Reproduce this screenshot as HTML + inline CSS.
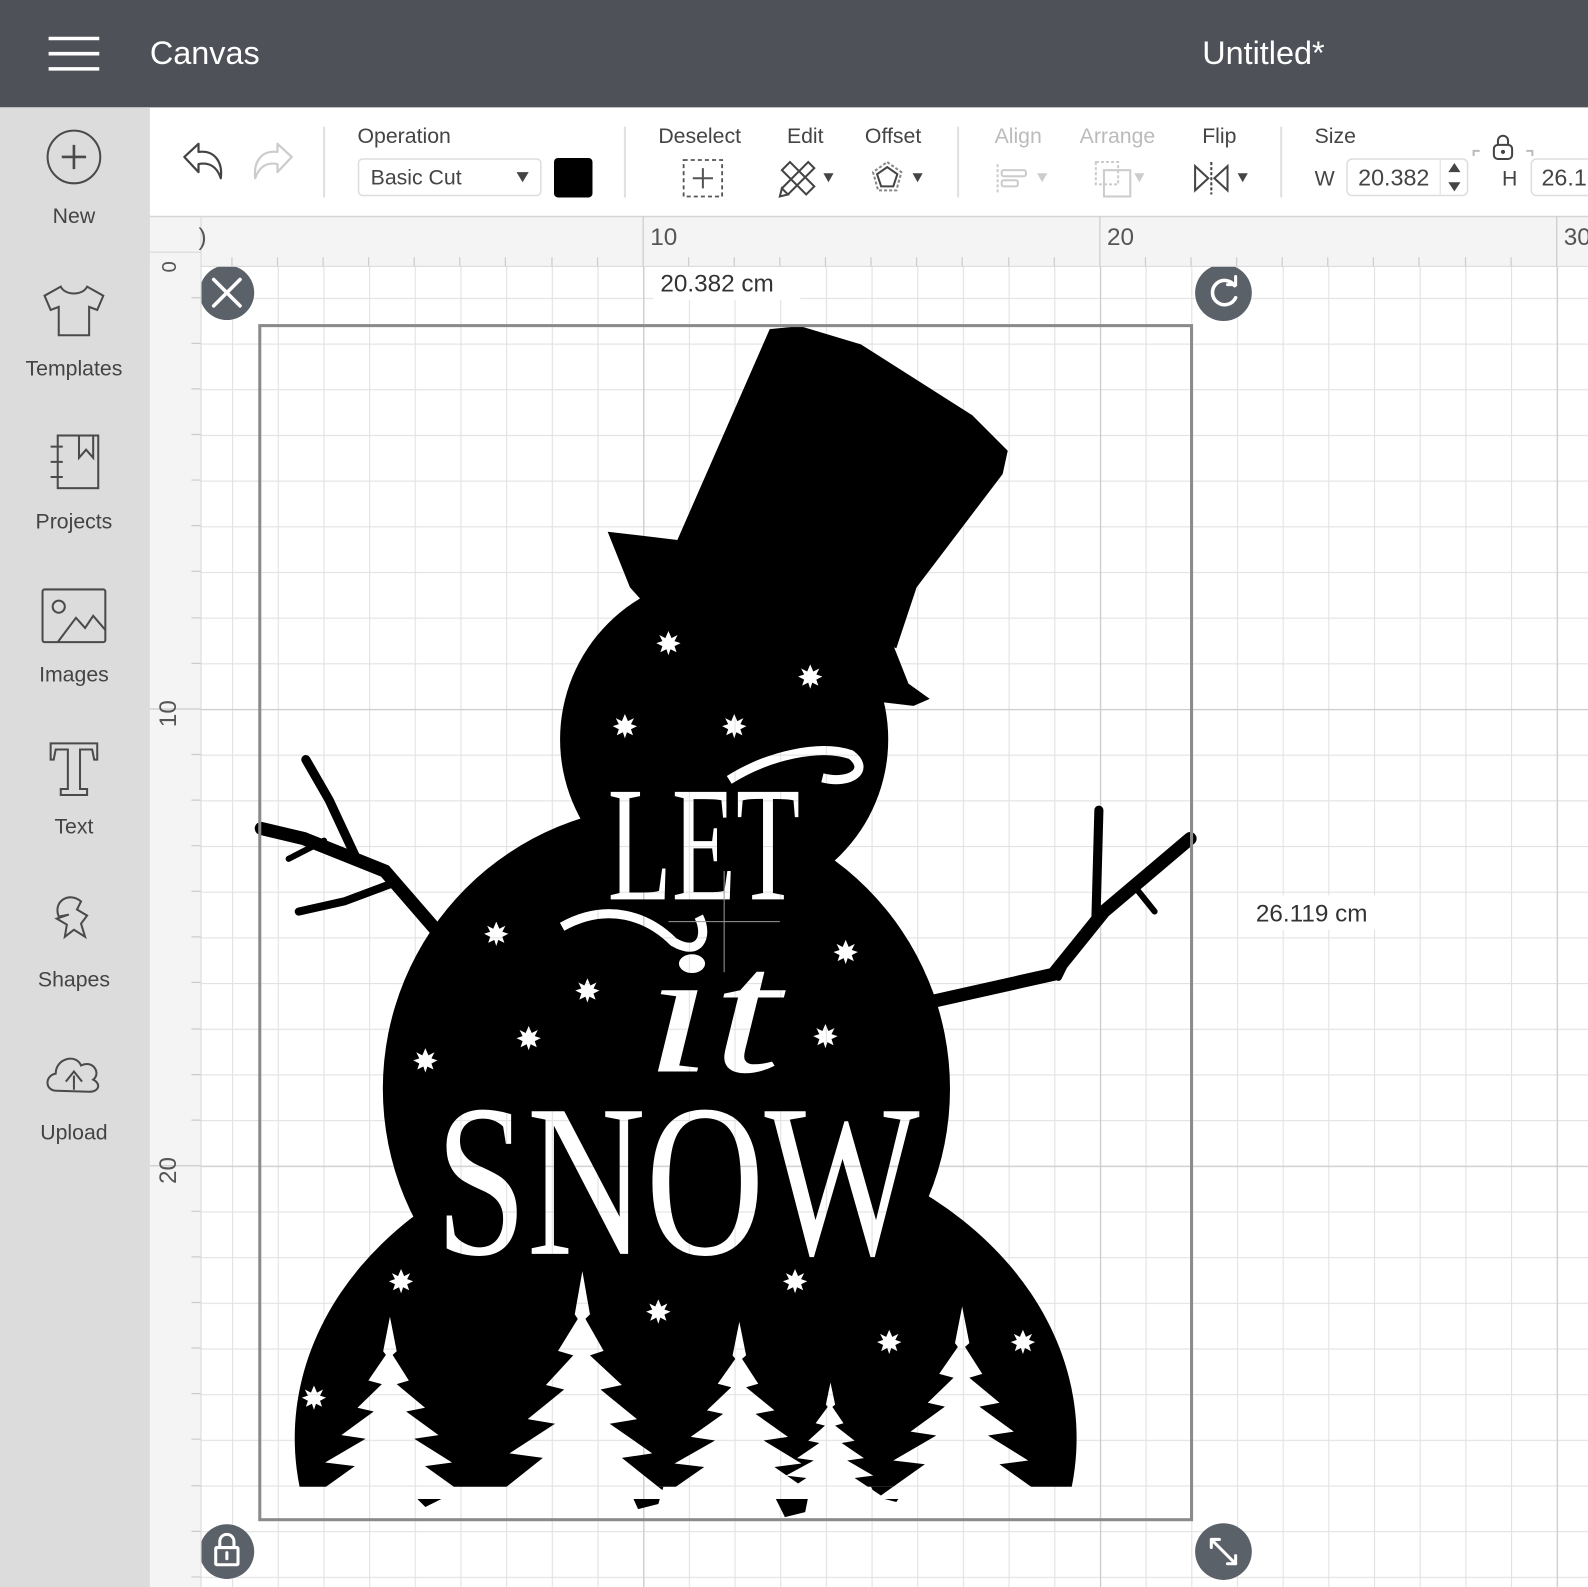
<!DOCTYPE html>
<html><head><meta charset="utf-8"><style>
html,body{margin:0;padding:0;width:1588px;height:1587px;overflow:hidden;background:#fff;font-family:"Liberation Sans",sans-serif}
svg{position:absolute;left:0;top:0}
</style></head><body>
<svg width="1588" height="1587" viewBox="0 0 1588 1587" xmlns="http://www.w3.org/2000/svg" font-family="Liberation Sans, sans-serif">
<defs>
<pattern id="gmin" patternUnits="userSpaceOnUse" x="184" y="249" width="45.1" height="45.1">
<path d="M0.5,0V45.1M0,0.5H45.1" stroke="#e2e2e2" stroke-width="1.2" fill="none"/></pattern>
<pattern id="gmaj" patternUnits="userSpaceOnUse" x="184" y="249" width="451" height="451">
<path d="M0.5,0V451M0,0.5H451" stroke="#cdcdcd" stroke-width="1.5" fill="none"/></pattern>
<symbol id="tree" viewBox="-60 0 120 200" preserveAspectRatio="none" overflow="visible">
<polygon points="0,0 5,38 2,42 14,70 5,74 26,100 12,104 36,130 18,134 46,160 26,164 60,200 -60,200 -26,164 -48,160 -18,134 -36,130 -12,104 -24,100 -6,74 -16,70 -3,42 -5,38"/>
</symbol>
<symbol id="star" viewBox="-12 -12 24 24" overflow="visible">
<polygon points="0,-12 3,-5 9,-8 6,-2 12,0 6,3 8,9 2,6 0,12 -2,6 -8,9 -6,3 -12,0 -6,-2 -9,-8 -3,-5"/>
</symbol>
<mask id="cut" maskUnits="userSpaceOnUse" x="0" y="0" width="1588" height="1587">
<rect x="0" y="0" width="1588" height="1587" fill="#fff"/>
<g fill="#000">
<use href="#tree" x="305" y="1300" width="160" height="180"/>
<use href="#tree" x="485" y="1255" width="180" height="225"/>
<use href="#tree" x="650" y="1305" width="160" height="175"/>
<use href="#tree" x="765" y="1365" width="110" height="115"/>
<use href="#tree" x="865" y="1290" width="170" height="190"/>
<g>
<use href="#star" x="648" y="623" width="24" height="24"/>
<use href="#star" x="788" y="656" width="24" height="24"/>
<use href="#star" x="605" y="705" width="24" height="24"/>
<use href="#star" x="713" y="705" width="24" height="24"/>
<use href="#star" x="478" y="910" width="24" height="24"/>
<use href="#star" x="568" y="966" width="24" height="24"/>
<use href="#star" x="823" y="928" width="24" height="24"/>
<use href="#star" x="510" y="1013" width="24" height="24"/>
<use href="#star" x="408" y="1035" width="24" height="24"/>
<use href="#star" x="803" y="1011" width="24" height="24"/>
<use href="#star" x="384" y="1253" width="24" height="24"/>
<use href="#star" x="638" y="1283" width="24" height="24"/>
<use href="#star" x="773" y="1253" width="24" height="24"/>
<use href="#star" x="866" y="1313" width="24" height="24"/>
<use href="#star" x="998" y="1313" width="24" height="24"/>
<use href="#star" x="298" y="1368" width="24" height="24"/>
</g>
<text x="600" y="888" font-family="Liberation Serif, serif" font-size="162" textLength="190" lengthAdjust="spacingAndGlyphs">LET</text>
<path d="M555,915 C600,890 640,905 665,930 C690,945 700,925 690,905" stroke="#000" stroke-width="9" fill="none"/>
<path d="M720,770 C760,745 810,735 840,745 C860,760 840,775 812,768" stroke="#000" stroke-width="9" fill="none"/>
<text x="636" y="1058" font-family="Liberation Serif, serif" font-style="italic" font-size="175" textLength="135" lengthAdjust="spacingAndGlyphs">it</text>
<text x="430" y="1238" font-family="Liberation Serif, serif" font-size="215" textLength="478" lengthAdjust="spacingAndGlyphs">SNOW</text>
</g>
</mask>
<clipPath id="bclip"><rect x="0" y="0" width="1588" height="1468"/></clipPath>
</defs>
<g transform="scale(1.0128)">
<!-- canvas -->
<rect x="148" y="213" width="1440" height="1374" fill="#fff"/>
<rect x="198" y="263" width="1390" height="1324" fill="url(#gmin)"/>
<rect x="198" y="263" width="1390" height="1324" fill="url(#gmaj)"/>

<!-- snowman -->
<g mask="url(#cut)" fill="#000">
<ellipse cx="677" cy="1420" rx="386" ry="305" clip-path="url(#bclip)"/>
<circle cx="658" cy="1075" r="280"/>
<circle cx="715" cy="730" r="162"/>
<polygon points="760,325 790,322 850,340 960,410 995,445 990,468 905,580 885,640 690,560 668,535"/>
<polygon points="600,525 668,533 880,632 897,675 918,690 902,697 860,692 760,640 640,600 622,580"/>
<g stroke="#000" fill="none" stroke-linecap="round">
<path d="M445,935 L380,860 L300,828 L258,818" stroke-width="13"/>
<path d="M352,848 L325,790 L302,750" stroke-width="9"/>
<path d="M388,872 L340,890 L295,900" stroke-width="8"/>
<path d="M320,830 L285,848" stroke-width="6"/>
<path d="M915,990 L1040,962 L1090,900 L1175,828" stroke-width="13"/>
<path d="M1082,910 L1085,800" stroke-width="9"/>
<path d="M1045,965 L1062,930" stroke-width="7"/>
<path d="M1120,875 L1140,900" stroke-width="6"/>
</g>
<path d="M400,1468 l20,20 20,-10 10,-12z M620,1468 l10,22 20,-5 5,-17z M760,1468 l15,30 20,-5 5,-25z M860,1468 l5,10 20,5 10,-15z"/>
</g>
<path d="M660,910H770M715,860V960" stroke="#999" stroke-width="1"/>

<!-- bounding box -->
<rect x="256.5" y="321.5" width="920" height="1179" fill="none" stroke="#8a8a8a" stroke-width="3"/>
<rect x="645" y="262" width="145" height="34" fill="#fff"/>
<text x="652" y="288" font-size="24" fill="#333">20.382 cm</text>
<rect x="1232" y="884" width="135" height="34" fill="#fff"/>
<text x="1240" y="910" font-size="24" fill="#333">26.119 cm</text>
<g fill="#5b6168">
<circle cx="224" cy="289" r="27"/><circle cx="1208" cy="289" r="28"/>
<circle cx="224" cy="1532" r="27"/><circle cx="1208" cy="1532" r="28"/>
</g>
<g stroke="#fff" stroke-width="3.5" fill="none" stroke-linecap="round">
<path d="M211,276L237,302M237,276L211,302"/>
<path d="M1219,282A12,12 0 1 0 1220,294"/><path d="M1212,281h8v-8" stroke-width="3"/>
<rect x="213" y="1528" width="22" height="17" rx="1" stroke-width="3"/><path d="M217,1528v-6a7,7 0 0 1 14,0v6" stroke-width="3"/><path d="M224,1533v6" stroke-width="3"/>
<path d="M1196,1520L1220,1544M1196,1520h8M1196,1520v8M1220,1544h-8M1220,1544v-8" stroke-width="3"/>
</g>

<!-- rulers -->
<rect x="148" y="213" width="1440" height="50" fill="#f4f4f4"/>
<rect x="148" y="213" width="50" height="1374" fill="#f4f4f4"/>
<line x1="148" y1="213.5" x2="1588" y2="213.5" stroke="#d6d6d6" stroke-width="2"/>
<line x1="198" y1="263" x2="1588" y2="263" stroke="#d8d8d8"/>
<line x1="198.5" y1="213" x2="198.5" y2="1587" stroke="#d8d8d8"/>
<line x1="148" y1="249" x2="198" y2="249" stroke="#d8d8d8"/>
<g stroke="#ccc" stroke-width="1.2">
<path d="M229,254V263M274,254V263M319,254V263M364,254V263M409,254V263M454,254V263M499,254V263M545,254V263M590,254V263M680,254V263M725,254V263M770,254V263M815,254V263M860,254V263M905,254V263M950,254V263M996,254V263M1041,254V263M1131,254V263M1176,254V263M1221,254V263M1266,254V263M1311,254V263M1356,254V263M1401,254V263M1447,254V263M1492,254V263M1582,254V263"/>
<path d="M635,213V263M1086,213V263M1537,213V263"/>
<path d="M189,294H198M189,339H198M189,384H198M189,429H198M189,474H198M189,519H198M189,564H198M189,610H198M189,655H198M189,745H198M189,790H198M189,835H198M189,880H198M189,925H198M189,970H198M189,1016H198M189,1061H198M189,1106H198M189,1196H198M189,1241H198M189,1286H198M189,1331H198M189,1376H198M189,1421H198M189,1467H198M189,1512H198M189,1557H198"/>
<path d="M148,700H198M148,1151H198"/>
</g>
<g font-size="24" fill="#555">
<text x="196" y="242">)</text>
<text x="642" y="242">10</text>
<text x="1093" y="242">20</text>
<text x="1544" y="242">30</text>
<text transform="translate(174,718) rotate(-90)">10</text>
<text transform="translate(174,1169) rotate(-90)">20</text>
<text transform="translate(174,269) rotate(-90)" font-size="20">0</text>
</g>

<!-- toolbar -->
<rect x="148" y="106" width="1440" height="107" fill="#fff"/>
<g stroke="#e0e0e0" stroke-width="2"><path d="M320,125V195M617,125V195M946,125V195M1265,125V195"/></g>
<g fill="none" stroke="#444" stroke-width="2.2" stroke-linejoin="round">
<path d="M182,155L196,142V150C212,148 220,160 218,176C214,164 206,160 196,162V170Z"/>
</g>
<g fill="none" stroke="#ccc" stroke-width="2.2" stroke-linejoin="round">
<path d="M288,155L274,142V150C258,148 250,160 252,176C256,164 264,160 274,162V170Z"/>
</g>
<g font-size="21" fill="#444">
<text x="353" y="141">Operation</text>
<text x="650" y="141">Deselect</text>
<text x="777" y="141">Edit</text>
<text x="854" y="141">Offset</text>
<text x="982" y="141" fill="#bbb">Align</text>
<text x="1066" y="141" fill="#bbb">Arrange</text>
<text x="1187" y="141">Flip</text>
<text x="1298" y="141">Size</text>
<text x="1298" y="183">W</text>
<text x="1483" y="183">H</text>
</g>
<rect x="354" y="157" width="180" height="36" rx="4" fill="#fff" stroke="#ddd" stroke-width="1.5"/>
<text x="366" y="182" font-size="21" fill="#444">Basic Cut</text>
<path d="M510,170h12l-6,10z" fill="#444"/>
<rect x="547" y="156" width="38" height="39" rx="4" fill="#000"/>
<rect x="675" y="158" width="38" height="36" fill="none" stroke="#555" stroke-width="1.8" stroke-dasharray="4,3"/>
<path d="M694,166V186M684,176H704" stroke="#555" stroke-width="2"/>
<g fill="none" stroke="#444" stroke-width="2">
<path d="M772,186L798,160L804,166L778,192Z M770,194L772,186 778,192Z"/>
<path d="M772,168L780,160L804,184L796,192Z"/>
<path d="M876,160L890,170L885,188H867L862,170Z" stroke-dasharray="3,2" stroke="#888"/>
<path d="M876,165L886,172L882,184H870L866,172Z"/>
</g>
<path d="M813,171h10l-5,9z M901,171h10l-5,9z M1222,171h10l-5,9z" fill="#444"/>
<path d="M1024,171h10l-5,9z M1120,171h10l-5,9z" fill="#ccc"/>
<g fill="none" stroke="#ccc" stroke-width="2">
<path d="M985,162V192" stroke-dasharray="3,2"/><rect x="989" y="168" width="24" height="6" rx="2"/><rect x="989" y="178" width="16" height="6" rx="2"/>
<rect x="1082" y="160" width="22" height="22" stroke-dasharray="3,2"/><rect x="1090" y="168" width="26" height="26"/>
</g>
<g fill="none" stroke="#444" stroke-width="2">
<path d="M1180,164L1193,176L1180,188Z M1212,164L1199,176L1212,188Z"/>
<path d="M1196,160V192" stroke-dasharray="3,2"/>
</g>
<rect x="1330" y="157" width="119" height="36" rx="5" fill="#fff" stroke="#ddd" stroke-width="1.5"/>
<line x1="1422" y1="158" x2="1422" y2="192" stroke="#ddd"/>
<text x="1341" y="183" font-size="23" fill="#444">20.382</text>
<path d="M1430,170l6,-9 6,9z M1430,180l6,9 6,-9z" fill="#444"/>
<rect x="1512" y="157" width="90" height="36" rx="5" fill="#fff" stroke="#ddd" stroke-width="1.5"/>
<text x="1522" y="183" font-size="23" fill="#444">26.1</text>
<g fill="none" stroke="#444" stroke-width="2"><rect x="1475" y="143" width="18" height="14" rx="4"/><path d="M1479,143v-4a5,5 0 0 1 10,0v4"/><path d="M1455,154v-5h6M1513,154v-5h-6" stroke="#bbb"/></g>
<circle cx="1484" cy="150" r="2" fill="#444"/>

<!-- top bar -->
<rect x="0" y="0" width="1588" height="106" fill="#4e5158"/>
<g stroke="#fff" stroke-width="3.5"><path d="M48,38H98M48,53H98M48,68H98"/></g>
<text x="148" y="63" font-size="32" fill="#fff">Canvas</text>
<text x="1187" y="63" font-size="32" fill="#fff">Untitled*</text>

<!-- sidebar -->
<rect x="0" y="106" width="148" height="1481" fill="#dcdcdc"/>
<g fill="none" stroke="#4a4a4a" stroke-width="2">
<circle cx="73" cy="155" r="26"/><path d="M73,143V167M61,155H85" stroke-width="2.6"/>
<path d="M60,283L44,292L50,306L58,303V331H88V303L96,306L102,292L86,283C82,292 64,292 60,283Z"/>
<rect x="57" y="430" width="40" height="52"/><path d="M78,430V452L85,444L92,452V430"/><path d="M50,441h12M50,456h12M50,471h12"/>
<rect x="42" y="582" width="62" height="52" rx="2"/><circle cx="58" cy="599" r="6"/><path d="M57,634L75,610L84,620L92,608L104,622"/>
<path d="M50,734H96V750H93L91,740H79V779H86V785H60V779H67V740H55L53,750H50Z"/>
<path d="M58,905C52,890 68,880 80,890L76,898L86,904L80,912L84,925L73,918L64,925L66,913L56,907L68,903Z"/>
<path d="M56,1077C44,1077 44,1062 55,1060C55,1045 75,1040 80,1052C92,1046 100,1060 92,1066C100,1070 98,1078 88,1078Z"/><path d="M73,1076V1062M65,1068L73,1058L81,1068"/>
</g>
<g font-size="21" fill="#444" text-anchor="middle">
<text x="73" y="220">New</text>
<text x="73" y="371">Templates</text>
<text x="73" y="522">Projects</text>
<text x="73" y="673">Images</text>
<text x="73" y="823">Text</text>
<text x="73" y="974">Shapes</text>
<text x="73" y="1125">Upload</text>
</g>
</g>
</svg>
</body></html>
